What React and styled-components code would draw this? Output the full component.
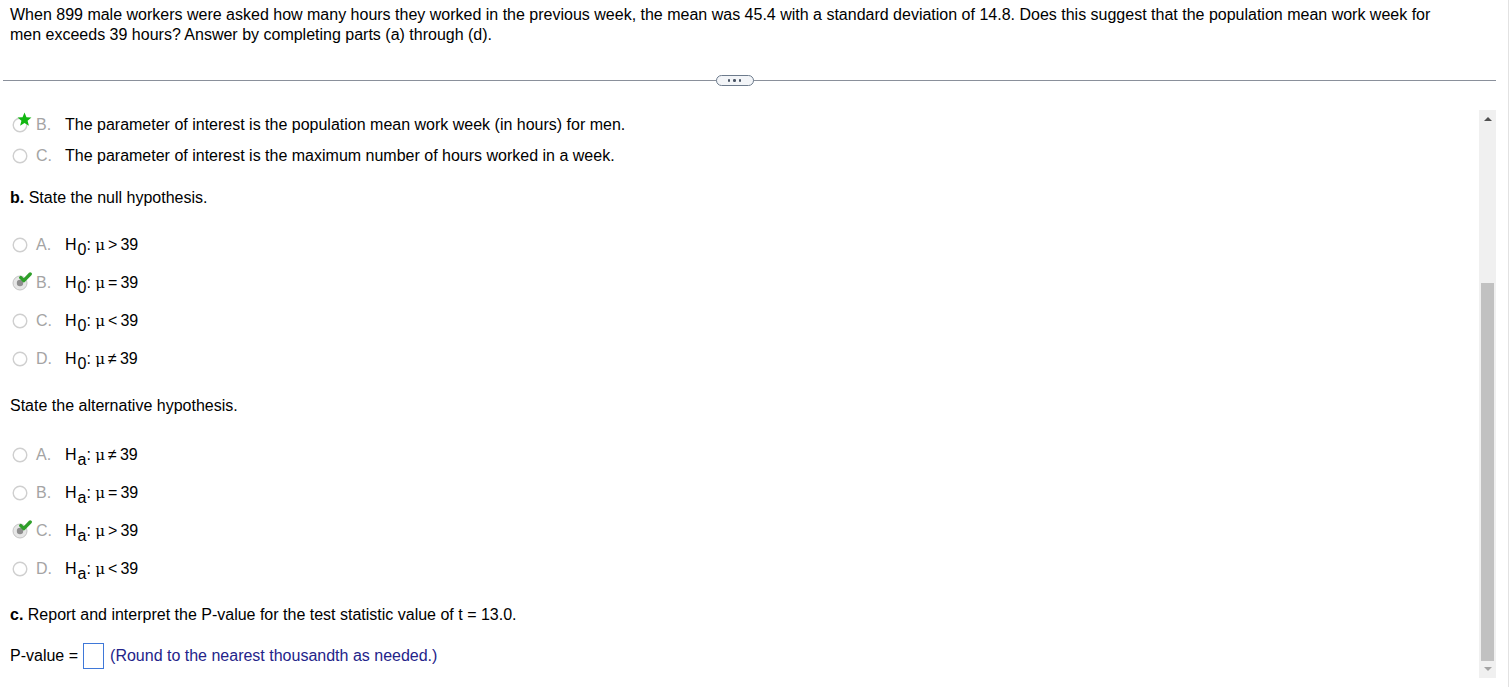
import React from "react";
import styled, { createGlobalStyle } from "styled-components";

const GlobalStyle = createGlobalStyle`
  html, body {
    margin: 0;
    padding: 0;
    background: #ffffff;
  }
  body {
    font-family: "Liberation Sans", Arial, sans-serif;
    font-size: 16px;
    color: #000;
  }
`;

const nullOptions = [
  { letter: "A", op: ">", state: "off" },
  { letter: "B", op: "=", state: "check" },
  { letter: "C", op: "<", state: "off" },
  { letter: "D", op: "≠", state: "off" },
];

const altOptions = [
  { letter: "A", op: "≠", state: "off" },
  { letter: "B", op: "=", state: "off" },
  { letter: "C", op: ">", state: "check" },
  { letter: "D", op: "<", state: "off" },
];

const Radio = ({ state }) => (
  <RadioBox>
    <svg width="16" height="16" viewBox="0 0 16 16">
      {state === "check" ? (
        <>
          <circle cx="8" cy="8" r="7" fill="#e6e6e6" stroke="#c4c4c4" strokeWidth="1" />
          <circle cx="8" cy="8" r="3.2" fill="#8e8e8e" />
        </>
      ) : (
        <circle cx="8" cy="8" r="6.8" fill="#fff" stroke="#cfcfcf" strokeWidth="1.4" />
      )}
    </svg>
    {state === "star" && (
      <Mark $left={5} $top={-5}>
        <svg width="15" height="15" viewBox="0 0 16 16">
          <polygon
            points="8,0.5 10.1,5.6 15.4,5.9 11.3,9.3 12.7,14.6 8,11.6 3.3,14.6 4.7,9.3 0.6,5.9 5.9,5.6"
            fill="#12b712"
          />
        </svg>
      </Mark>
    )}
    {state === "check" && (
      <Mark $left={7} $top={-3}>
        <svg width="13" height="11" viewBox="0 0 13 11">
          <path d="M1.8 5.6 L4.8 8.6 L11.2 2" fill="none" stroke="#2f9f2a" strokeWidth="3.4" strokeLinecap="round" strokeLinejoin="round" />
        </svg>
      </Mark>
    )}
  </RadioBox>
);

const Hyp = ({ sub, op }) => (
  <HypText>
    H<Sub>{sub}</Sub>: <Mu>μ</Mu>
    <Op>{op}</Op>39
  </HypText>
);

export default function App() {
  return (
    <>
      <GlobalStyle />
      <Page>
        <Header>
          When 899 male workers were asked how many hours they worked in the previous week, the mean was 45.4 with a standard deviation of 14.8. Does this suggest that the population mean work week for men exceeds 39 hours? Answer by completing parts (a) through (d).
        </Header>

        <Divider>
          <MoreButton>
            <Dot />
            <Dot />
            <Dot />
          </MoreButton>
        </Divider>

        <Main>
          <Content>
            <Option>
              <Radio state="star" />
              <Letter>B.</Letter>
              <span>The parameter of interest is the population mean work week (in hours) for men.</span>
            </Option>
            <Option>
              <Radio state="off" />
              <Letter>C.</Letter>
              <span>The parameter of interest is the maximum number of hours worked in a week.</span>
            </Option>

            <Prompt $top={17}>
              <b>b.</b> State the null hypothesis.
            </Prompt>

            <OptionGroup>
              {nullOptions.map((o) => (
                <HypOption key={o.letter}>
                  <Radio state={o.state} />
                  <Letter>{o.letter}.</Letter>
                  <Hyp sub="0" op={o.op} />
                </HypOption>
              ))}
            </OptionGroup>

            <Prompt $top={18}>State the alternative hypothesis.</Prompt>

            <OptionGroup $top={20}>
              {altOptions.map((o) => (
                <HypOption key={o.letter}>
                  <Radio state={o.state} />
                  <Letter>{o.letter}.</Letter>
                  <Hyp sub="a" op={o.op} />
                </HypOption>
              ))}
            </OptionGroup>

            <Prompt $top={17}>
              <b>c.</b> Report and interpret the P-value for the test statistic value of t = 13.0.
            </Prompt>

            <AnswerRow>
              <span>P-value =</span>
              <AnswerBox />
              <Hint>(Round to the nearest thousandth as needed.)</Hint>
            </AnswerRow>
          </Content>

          <ScrollTrack>
            <Arrow $up />
            <ThumbArea>
              <Thumb />
            </ThumbArea>
            <Arrow />
          </ScrollTrack>
        </Main>
      </Page>
    </>
  );
}

const Page = styled.div`
  width: 1509px;
  height: 687px;
  overflow: hidden;
  box-sizing: border-box;
  border-right: 1px solid #e2e2e2;
`;

const Header = styled.div`
  padding: 5px 60px 0 10px;
  line-height: 20px;
`;

const Divider = styled.div`
  position: relative;
  height: 11px;
  margin: 30px 12px 0 3px;
  display: flex;
  justify-content: center;
  align-items: center;

  &::before {
    content: "";
    position: absolute;
    left: 0;
    right: 0;
    top: 5px;
    height: 1px;
    background: #8a909b;
  }
`;

const MoreButton = styled.div`
  position: relative;
  width: 36px;
  height: 9px;
  margin-left: -30px;
  border: 1px solid #6d7b8c;
  border-radius: 6px;
  background: #f3f5f8;
  display: flex;
  justify-content: center;
  align-items: center;
  gap: 3px;
`;

const Dot = styled.span`
  width: 2.5px;
  height: 2.5px;
  border-radius: 50%;
  background: #4a5565;
`;

const Main = styled.div`
  display: flex;
  align-items: flex-start;
  padding-right: 12px;
`;

const Content = styled.div`
  flex: 1;
  padding: 23px 0 0 10px;
`;

const Option = styled.div`
  height: 31px;
  display: flex;
  align-items: center;
`;

const OptionGroup = styled.div`
  margin-top: ${(p) => p.$top || 18}px;
`;

const HypOption = styled.div`
  height: 38px;
  display: flex;
  align-items: center;
`;

const RadioBox = styled.span`
  position: relative;
  width: 16px;
  height: 16px;
  margin-left: 2px;
  margin-right: 8px;
  flex: none;
  display: inline-flex;
`;

const Mark = styled.span`
  position: absolute;
  left: ${(p) => p.$left}px;
  top: ${(p) => p.$top}px;
  display: inline-flex;
`;

const Letter = styled.span`
  width: 29px;
  color: #a4a4a4;
  flex: none;
`;

const HypText = styled.span`
  display: inline-flex;
  align-items: baseline;
  white-space: pre;
`;

const Sub = styled.span`
  font-size: 16px;
  position: relative;
  top: 5px;
  margin-left: 1px;
`;

const Mu = styled.span`
  font-family: "DejaVu Serif", "Liberation Serif", serif;
  font-size: 15px;
`;

const Op = styled.span`
  margin: 0 3px;
`;

const Prompt = styled.div`
  margin-top: ${(p) => p.$top}px;
  line-height: 20px;
`;

const AnswerRow = styled.div`
  margin-top: 18px;
  display: flex;
  align-items: center;
  height: 26px;
`;

const AnswerBox = styled.span`
  width: 19px;
  height: 24px;
  margin: 0 6px 0 5px;
  border: 1px solid #3f78d8;
`;

const Hint = styled.span`
  color: #24248a;
`;

const ScrollTrack = styled.div`
  width: 17px;
  height: 568px;
  margin-top: 24px;
  background: #f0f0f0;
  display: flex;
  flex-direction: column;
  align-items: center;
`;

const ThumbArea = styled.div`
  flex: 1;
  width: 100%;
  display: flex;
  flex-direction: column;
  justify-content: flex-end;
  align-items: center;
`;

const Thumb = styled.div`
  width: 13px;
  height: 378px;
  background: #c1c1c1;
`;

const Arrow = styled.div`
  width: 0;
  height: 0;
  margin: ${(p) => (p.$up ? "7px 0 6px" : "6px 0 7px")};
  border-left: 4px solid transparent;
  border-right: 4px solid transparent;
  ${(p) =>
    p.$up ? "border-bottom: 4px solid #505050;" : "border-top: 4px solid #a3a3a3;"}
`;
